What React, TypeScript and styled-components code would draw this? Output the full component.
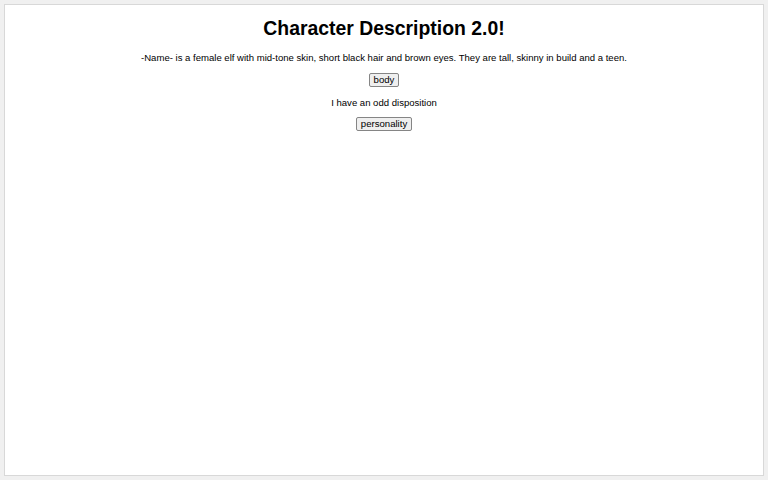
import React from "react";
import styled, { createGlobalStyle } from "styled-components";

const Global = createGlobalStyle`
  html, body { margin: 0; padding: 0; height: 100%; }
  body {
    background: #f0f0f0;
    font-family: "Liberation Sans", Arial, sans-serif;
    color: #000;
  }
  #root { height: 100%; }
`;

const Page = styled.div`
  box-sizing: border-box;
  height: 480px;
  padding: 4px;
  display: flex;
`;

const Panel = styled.main`
  flex: 1;
  background: #fff;
  border: 1px solid #d8d8d8;
  display: flex;
  flex-direction: column;
  align-items: center;
  padding-top: 11px;
`;

const Title = styled.h1`
  margin: 0;
  font-size: 19.4px;
  font-weight: bold;
  line-height: 24px;
`;

const Line = styled.p<{ $top: number }>`
  margin: ${(p) => p.$top}px 0 0;
  font-size: 9.55px;
  line-height: 12px;
`;

const Toggle = styled.button<{ $top: number }>`
  margin-top: ${(p) => p.$top}px;
  font-family: "Liberation Sans", Arial, sans-serif;
  font-size: 9.6px;
  line-height: 12px;
  padding: 0 4px;
  background: #efefef;
  border: 1px solid #858585;
  border-radius: 2px;
  color: #000;
`;

export default function App() {
  return (
    <>
      <Global />
      <Page>
        <Panel>
          <Title>Character Description 2.0!</Title>
          <Line $top={12}>
            -Name- is a female elf with mid-tone skin, short black hair and brown eyes. They are tall,
            skinny in build and a teen.
          </Line>
          <Toggle $top={9}>body</Toggle>
          <Line $top={10}>I have an odd disposition</Line>
          <Toggle $top={8}>personality</Toggle>
        </Panel>
      </Page>
    </>
  );
}
